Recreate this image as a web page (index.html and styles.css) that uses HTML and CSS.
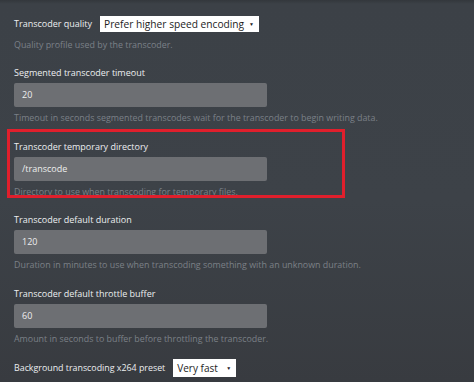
FILE: index.html
```html
<!DOCTYPE html>
<html>
<head>
<meta charset="utf-8">
<link rel="stylesheet" href="styles.css">
</head>
<body>
<div class="page">
  <div class="inline-row">
    <span class="label label-top">Transcoder quality</span>
    <div class="select select-quality"><span class="select-text">Prefer higher speed encoding</span><span class="arrow">▼</span></div>
  </div>
  <div class="help help-first">Quality profile used by the transcoder.</div>

  <div class="field">
    <div class="label">Segmented transcoder timeout</div>
    <div class="input">20</div>
    <div class="help">Timeout in seconds segmented transcodes wait for the transcoder to begin writing data.</div>
  </div>

  <div class="field highlighted">
    <div class="label">Transcoder temporary directory</div>
    <div class="input">/transcode</div>
    <div class="help">Directory to use when transcoding for temporary files.</div>
    <span class="annotation"></span>
  </div>

  <div class="field">
    <div class="label">Transcoder default duration</div>
    <div class="input">120</div>
    <div class="help">Duration in minutes to use when transcoding something with an unknown duration.</div>
  </div>

  <div class="field">
    <div class="label">Transcoder default throttle buffer</div>
    <div class="input">60</div>
    <div class="help">Amount in seconds to buffer before throttling the transcoder.</div>
  </div>

  <div class="inline-row last-row">
    <span class="label label-preset">Background transcoding x264 preset</span>
    <div class="select select-preset"><span class="select-text">Very fast</span><span class="arrow">▼</span></div>
  </div>
</div>
</body>
</html>
```

FILE: styles.css
```css
html, body {
  margin: 0;
  padding: 0;
}
body {
  width: 474px;
  height: 382px;
  overflow: hidden;
  background: linear-gradient(180deg, #33373c 0px, #3c4147 4px, #3d4248 200px, #383b40 382px);
  font-family: "Open Sans", "Noto Sans", sans-serif;
}
.page {
  padding: 16px 0 0 14px;
}
.inline-row {
  display: flex;
  align-items: center;
  gap: 8px;
  height: 16px;
}
.label {
  color: #eceef0;
  font-size: 9px;
  line-height: 14px;
  white-space: nowrap;
}
.label-top {
  font-size: 9px;
}
.label-preset {
  font-size: 8.85px;
}
.select {
  background: #ffffff;
  color: #1c1c1c;
  font-size: 10.2px;
  height: 16px;
  line-height: 16px;
  display: flex;
  align-items: center;
  justify-content: space-between;
  padding: 0 5px 0 4px;
  box-sizing: border-box;
  white-space: nowrap;
}
.select-quality {
  width: 159px;
}
.select-preset {
  width: 63px;
  height: 18px;
  font-size: 10px;
}
.arrow {
  font-size: 5px;
  line-height: 6px;
}
.help {
  color: #7b8087;
  font-size: 8.9px;
  line-height: 14px;
  margin-top: 4px;
  white-space: nowrap;
}
.help-first {
  margin-top: 6px;
}
.field {
  margin-top: 14.5px;
}
.help-first + .field {
  margin-top: 14px;
}
.field .label {
  margin-bottom: 3px;
}
.input {
  width: 253px;
  height: 24px;
  box-sizing: border-box;
  background: #6d6f73;
  border-radius: 2px;
  color: #eeeeee;
  font-size: 9px;
  line-height: 24px;
  padding-left: 8px;
}
.highlighted {
  position: relative;
}
.annotation {
  position: absolute;
  left: -7px;
  top: -10.5px;
  width: 338px;
  height: 69px;
  box-sizing: border-box;
  border: 3px solid #e01f2c;
}
.last-row {
  margin-top: 13.5px;
  height: 18px;
}
```
